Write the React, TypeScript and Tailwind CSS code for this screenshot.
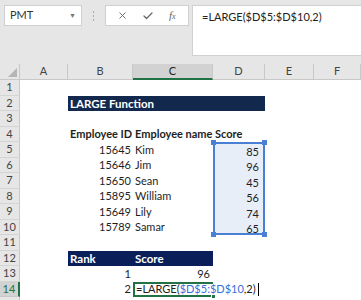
import { X, Check } from 'lucide-react';

const rowStart = [
  'row-start-1', 'row-start-2', 'row-start-3', 'row-start-4', 'row-start-5', 'row-start-6',
  'row-start-7', 'row-start-8', 'row-start-9', 'row-start-10', 'row-start-11', 'row-start-12',
  'row-start-13', 'row-start-14', 'row-start-15', 'row-start-16',
];

const employees = [
  { id: 15645, name: 'Kim', score: 85 },
  { id: 15646, name: 'Jim', score: 96 },
  { id: 15650, name: 'Sean', score: 45 },
  { id: 15895, name: 'William', score: 56 },
  { id: 15649, name: 'Lily', score: 74 },
  { id: 15789, name: 'Samar', score: 65 },
];

const columns = ['A', 'B', 'C', 'D', 'E', 'F'];

export default function App() {
  return (
    <div className="h-[300px] w-[361px] overflow-hidden bg-white text-[11px] text-[#1e1e1e]" style={{ fontFamily: 'Lato, "Open Sans", sans-serif' }}>
      {/* formula bar area */}
      <div className="flex h-[64px] items-start bg-[#e6e6e6] pt-[5px]">
        <div className="ml-[4px] flex h-[21px] w-[78px] items-center justify-between border border-[#d0d0d0] bg-white pl-[5px] pr-[5px]">
          <span className="text-[11px] text-[#333]">PMT</span>
          <span className="text-[7px] text-[#777]">▼</span>
        </div>
        <div className="ml-[11px] mt-[6px] flex flex-col gap-[2px]">
          <span className="h-[2px] w-[1px] bg-[#aaa]" />
          <span className="h-[2px] w-[1px] bg-[#aaa]" />
          <span className="h-[2px] w-[1px] bg-[#aaa]" />
        </div>
        <div className="ml-[11px] flex h-[21px] w-[84px] items-center border border-[#d0d0d0] bg-white">
          <X className="ml-[11px] h-[11px] w-[11px] text-[#666]" strokeWidth={2} />
          <Check className="ml-[14px] h-[12px] w-[12px] text-[#666]" strokeWidth={2.5} />
          <span className="ml-[15px] text-[11px] italic text-[#666]" style={{ fontFamily: '"Liberation Serif", serif' }}>
            f<span className="text-[8px]">x</span>
          </span>
        </div>
        <div className="ml-[3px] h-[51px] flex-1 border border-r-0 border-[#d0d0d0] bg-white pl-[9px] pt-[3px]">
          <span className="text-[11px] text-[#222]">=LARGE($D$5:$D$10,2)</span>
        </div>
      </div>

      {/* sheet */}
      <div className="grid grid-cols-[20px_48px_65px_80px_52px_49px_1fr] grid-rows-[16px_repeat(15,15.5px)]">
        <div className="col-start-1 row-start-1 flex items-end justify-end border-b border-r border-[#c8c8c8] bg-[#e6e6e6] p-[2px]">
          <span className="h-0 w-0 border-b-[9px] border-l-[9px] border-b-[#b5b5b5] border-l-transparent" />
        </div>
        {columns.map((c, i) => (
          <div
            key={c}
            className={
              'row-start-1 flex items-center justify-center border-r text-[11px] ' +
              (c === 'C'
                ? 'border-b-2 border-b-[#217346] border-r-[#c8c8c8] bg-[#d2d2d2] text-[#222]'
                : 'border-b border-[#c8c8c8] bg-[#e6e6e6] text-[#444]')
            }
            style={{ gridColumnStart: i + 2 }}
          >
            {c}
          </div>
        ))}
        <div className="col-start-8 row-start-1 border-b border-[#c8c8c8] bg-[#e6e6e6]" />

        {Array.from({ length: 15 }, (_, i) => (
          <div
            key={i}
            className={
              'col-start-1 flex items-center justify-center border-b text-[11px] ' +
              rowStart[i + 1] +
              (i === 13
                ? ' border-b-[#c8c8c8] border-r-2 border-r-[#217346] bg-[#d2d2d2] text-[#217346]'
                : ' border-r border-[#d4d4d4] border-r-[#c8c8c8] bg-[#e6e6e6] text-[#444]')
            }
          >
            {i < 14 ? i + 1 : ''}
          </div>
        ))}

        {/* row 2 banner */}
        <div className="col-span-3 col-start-3 row-start-3 flex items-center bg-[#13284d] pl-[2px] text-[11.5px] font-bold text-white">
          LARGE Function
        </div>

        {/* row 4 headings */}
        <div className="col-start-3 row-start-5 flex items-center pl-[2px] font-bold">Employee ID</div>
        <div className="col-start-4 row-start-5 flex items-center whitespace-nowrap pl-[2px] font-bold">Employee name</div>
        <div className="col-start-5 row-start-5 flex items-center pl-[2px] font-bold">Score</div>

        {employees.map((e, i) => (
          <div key={e.id} className={'col-start-3 flex items-center justify-end pr-[2px] ' + rowStart[i + 5]}>
            {e.id}
          </div>
        ))}
        {employees.map((e, i) => (
          <div key={e.name} className={'col-start-4 flex items-center pl-[2px] ' + rowStart[i + 5]}>
            {e.name}
          </div>
        ))}

        {/* selected range D5:D10 */}
        <div className="relative col-start-5 row-span-6 row-start-6 flex flex-col border-2 border-[#4a7fd6] bg-[#e8eef8] pr-[4px]">
          {employees.map(e => (
            <div key={e.id} className="flex h-[15.5px] items-center justify-end">
              {e.score}
            </div>
          ))}
          <span className="absolute left-[-4px] top-[-4px] h-[5px] w-[5px] bg-[#4a7fd6]" />
          <span className="absolute right-[-4px] top-[-4px] h-[5px] w-[5px] bg-[#4a7fd6]" />
          <span className="absolute bottom-[-4px] left-[-4px] h-[5px] w-[5px] bg-[#4a7fd6]" />
          <span className="absolute bottom-[-4px] right-[-4px] h-[5px] w-[5px] bg-[#4a7fd6]" />
        </div>

        {/* row 12 banner */}
        <div className="col-span-2 col-start-3 row-start-13 flex items-center bg-[#0a1f5a] text-[11.5px] font-bold text-white">
          <span className="w-[65px] pl-[2px]">Rank</span>
          <span className="pl-[2px]">Score</span>
        </div>

        <div className="col-start-3 row-start-14 flex items-center justify-end pr-[2px]">1</div>
        <div className="col-start-4 row-start-14 flex items-center justify-end pr-[3px]">96</div>

        <div className="col-start-3 row-start-15 flex items-center justify-end pr-[2px]">2</div>
        <div className="relative col-start-4 row-start-15 flex items-center overflow-visible border-2 border-r-0 border-[#217346] pl-[1px]">
          <span className="shrink-0 whitespace-nowrap">
            =LARGE(<span className="text-[#3a6fd8]">$D$5:$D$10</span>,2)
          </span>
          <span className="ml-[2px] h-[13px] w-[1px] shrink-0 bg-black" />
          <span className="absolute bottom-[-4px] right-[-3px] h-[5px] w-[5px] border border-white bg-[#217346]" />
        </div>
      </div>
    </div>
  );
}
